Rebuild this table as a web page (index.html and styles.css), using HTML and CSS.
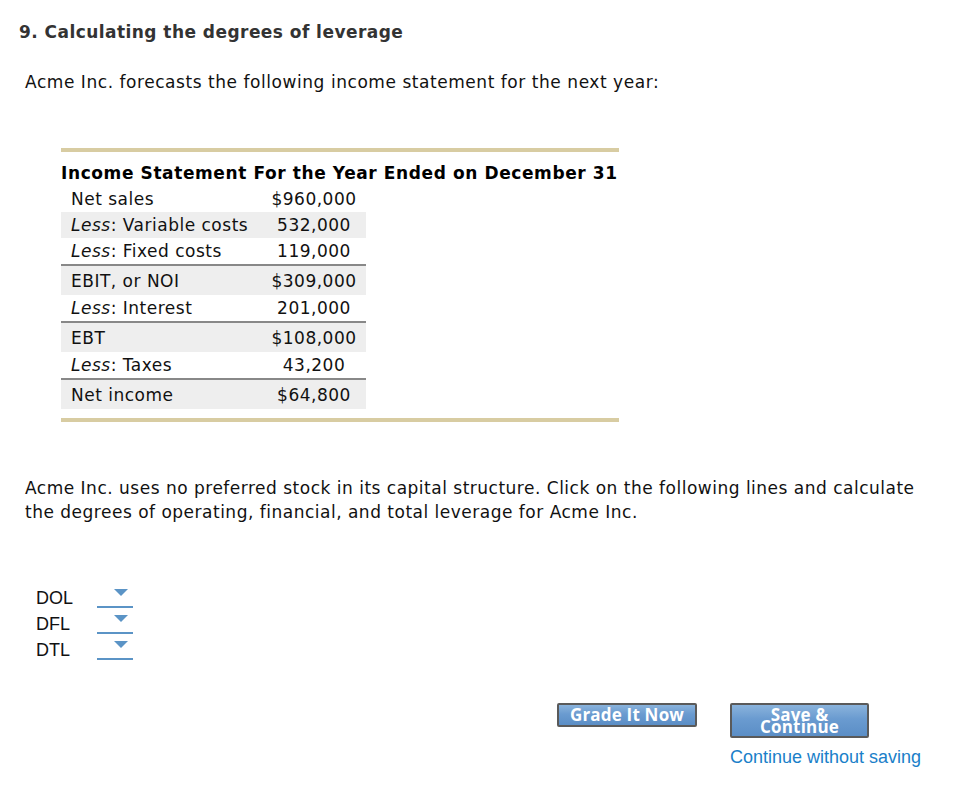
FILE: index.html
```html
<!DOCTYPE html>
<html>
<head>
<meta charset="utf-8">
<link rel="stylesheet" href="styles.css">
</head>
<body>
<div class="page">
  <h1 class="title">9. Calculating the degrees of leverage</h1>
  <p class="intro">Acme Inc. forecasts the following income statement for the next year:</p>

  <div class="statement">
    <div class="caption">Income Statement For the Year Ended on December 31</div>
    <table class="rows">
      <tr><td class="lbl">Net sales</td><td class="amt">$960,000</td></tr>
      <tr class="shade"><td class="lbl"><i>Less</i>: Variable costs</td><td class="amt">532,000</td></tr>
      <tr><td class="lbl"><i>Less</i>: Fixed costs</td><td class="amt">119,000</td></tr>
      <tr class="shade total"><td class="lbl">EBIT, or NOI</td><td class="amt">$309,000</td></tr>
      <tr><td class="lbl"><i>Less</i>: Interest</td><td class="amt">201,000</td></tr>
      <tr class="shade total"><td class="lbl">EBT</td><td class="amt">$108,000</td></tr>
      <tr><td class="lbl"><i>Less</i>: Taxes</td><td class="amt">43,200</td></tr>
      <tr class="shade total"><td class="lbl">Net income</td><td class="amt">$64,800</td></tr>
    </table>
  </div>

  <p class="question">Acme Inc. uses no preferred stock in its capital structure. Click on the following lines and calculate the degrees of operating, financial, and total leverage for Acme Inc.</p>

  <div class="answers">
    <div class="answer"><span class="key">DOL</span><span class="select"><span class="arrow"></span></span></div>
    <div class="answer"><span class="key">DFL</span><span class="select"><span class="arrow"></span></span></div>
    <div class="answer"><span class="key">DTL</span><span class="select"><span class="arrow"></span></span></div>
  </div>

  <div class="actions">
    <button class="btn grade">Grade It Now</button>
    <div class="save-col">
      <button class="btn save"><span>Save &amp;</span><span>Continue</span></button>
      <a class="skip" href="#">Continue without saving</a>
    </div>
  </div>
</div>
</body>
</html>
```

FILE: styles.css
```css
html, body {
  margin: 0;
  padding: 0;
  background: #fff;
}
body {
  font-family: "DejaVu Sans", Verdana, sans-serif;
  color: #111;
}
.page {
  width: 958px;
  height: 788px;
  overflow: hidden;
}
.title {
  margin: 0;
  padding: 21px 0 0 19px;
  font-size: 17px;
  letter-spacing: 0.45px;
  line-height: 22px;
  font-weight: bold;
  color: #333;
}
.intro {
  margin: 28px 0 0 25px;
  font-size: 17px;
  letter-spacing: 0.55px;
  line-height: 22px;
}
.statement {
  margin: 55px 0 0 61px;
  width: 558px;
  border-top: 4px solid #d8cca2;
  border-bottom: 4px solid #d8cca2;
  padding: 10px 0 9px;
}
.caption {
  font-weight: bold;
  font-size: 17px;
  letter-spacing: 0.6px;
  line-height: 22px;
  color: #000;
  white-space: nowrap;
}
.rows {
  border-collapse: collapse;
  width: 305px;
  margin-top: 2px;
  font-size: 17px;
  letter-spacing: 0.5px;
}
.rows td {
  height: 26px;
  padding: 0;
  line-height: 22px;
  white-space: nowrap;
}
.rows .lbl {
  padding-left: 10px;
  width: 191px;
}
.rows .amt {
  text-align: center;
}
.rows .shade td {
  background: #eeeeee;
}
.rows .total td {
  border-top: 2px solid #888;
  height: 28px;
  padding-top: 1px;
}
.question {
  margin: 54px 0 0 25px;
  width: 910px;
  font-size: 17px;
  letter-spacing: 0.5px;
  line-height: 24px;
}
.answers {
  margin: 61px 0 0 36px;
  display: flex;
  flex-direction: column;
}
.answer {
  display: flex;
  align-items: center;
  height: 26px;
  font-family: "Liberation Sans", Arial, sans-serif;
  font-size: 18px;
}
.key {
  width: 61px;
}
.select {
  position: relative;
  width: 36px;
  height: 20px;
  box-sizing: border-box;
  border-bottom: 2px solid #5b94c6;
}
.arrow {
  position: absolute;
  left: 17px;
  top: 1px;
  width: 0;
  height: 0;
  border-left: 7px solid transparent;
  border-right: 7px solid transparent;
  border-top: 7px solid #5b94c6;
}
.actions {
  margin: 40px 0 0 557px;
  display: flex;
  gap: 33px;
  align-items: flex-start;
}
.btn {
  font-family: "Open Sans", "DejaVu Sans", sans-serif;
  font-weight: bold;
  color: #fff;
  border: 2px solid #5a5a5a;
  border-radius: 2px;
  background: linear-gradient(#8ab3dc, #6a9bd0 45%, #5b8ec6);
  padding: 0;
  margin: 0;
  font-size: 17px;
  letter-spacing: 0.2px;
  cursor: pointer;
}
.grade {
  width: 140px;
  height: 24px;
  line-height: 18px;
}
.save-col {
  display: flex;
  flex-direction: column;
  align-items: flex-start;
}
.save {
  width: 139px;
  height: 35px;
  display: flex;
  flex-direction: column;
  align-items: center;
  justify-content: center;
  line-height: 12px;
}
.save span {
  display: block;
}
.skip {
  margin-top: 8px;
  font-family: "Liberation Sans", Arial, sans-serif;
  font-size: 18px;
  line-height: 22px;
  color: #1a80c9;
  text-decoration: none;
  white-space: nowrap;
}
```
